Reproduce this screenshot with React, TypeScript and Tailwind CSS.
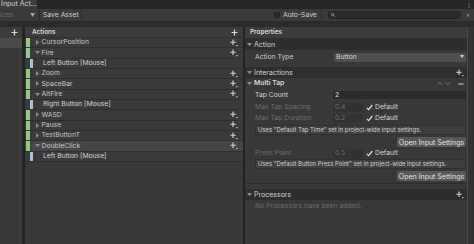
import React from "react";

const Tri = ({ open }: { open?: boolean }) => (
  <svg width="5" height="5" viewBox="0 0 5 5" className="shrink-0">
    {open ? <path d="M0 1 L5 1 L2.5 4.2 Z" fill="#8c8c8c" /> : <path d="M1 0 L4.2 2.5 L1 5 Z" fill="#8c8c8c" />}
  </svg>
);

const PlusMore = () => (
  <svg width="8" height="8" viewBox="0 0 8 8" className="shrink-0">
    <path d="M3 0.5 V6 M0.3 3.2 H5.7" stroke="#d8d8d8" strokeWidth="1.1" />
    <path d="M5.6 6.2 L8 6.2 L6.8 7.6 Z" fill="#d8d8d8" />
  </svg>
);

const Plus = () => (
  <svg width="7" height="7" viewBox="0 0 7 7" className="shrink-0">
    <path d="M3.5 0.5 V6.5 M0.5 3.5 H6.5" stroke="#d8d8d8" strokeWidth="1.2" />
  </svg>
);

const Check = () => (
  <svg width="7" height="7" viewBox="0 0 7 7" className="shrink-0">
    <path d="M0.8 3.8 L2.6 5.6 L6.3 1" stroke="#e6e6e6" strokeWidth="1.2" fill="none" />
  </svg>
);

const UpDown = () => (
  <svg width="14" height="5" viewBox="0 0 14 5" className="shrink-0">
    <path d="M0.5 3.8 L2.8 1.2 L5.1 3.8" stroke="#7a7a7a" strokeWidth="0.9" fill="none" />
    <path d="M8.5 1.2 L10.8 3.8 L13.1 1.2" stroke="#7a7a7a" strokeWidth="0.9" fill="none" />
  </svg>
);

type Row = { name: string; kind: "action" | "binding"; open?: boolean; selected?: boolean };

const rows: Row[] = [
  { name: "CursorPosition", kind: "action" },
  { name: "Fire", kind: "action", open: true },
  { name: "Left Button [Mouse]", kind: "binding" },
  { name: "Zoom", kind: "action" },
  { name: "SpaceBar", kind: "action" },
  { name: "AltFire", kind: "action", open: true },
  { name: "Right Button [Mouse]", kind: "binding" },
  { name: "WASD", kind: "action" },
  { name: "Pause", kind: "action" },
  { name: "TestButtonT", kind: "action" },
  { name: "DoubleClick", kind: "action", open: true, selected: true },
  { name: "Left Button [Mouse]", kind: "binding" },
];

const SectionHeader = ({ title, plus }: { title: string; plus?: boolean }) => (
  <div className="h-[11px] bg-[#2e2e2e] flex items-center pl-[2px] pr-[3px] gap-[2px] text-[#d2d2d2] text-[7px]">
    <Tri open />
    <span className="flex-1">{title}</span>
    {plus && <PlusMore />}
  </div>
);

const DefaultField = ({ label, value, h }: { label: string; value: string; h: string }) => (
  <div className={`${h} flex items-center pl-[10px]`}>
    <span className="w-[78px] text-[#6f6f6f]">{label}</span>
    <div className="w-[30px] h-[9px] bg-[#323232] rounded-[1px] flex items-center pl-[2px] text-[#6f6f6f]">{value}</div>
    <div className="ml-[3px] flex items-center gap-[2px] text-[#d6d6d6]">
      <Check />
      <span>Default</span>
    </div>
  </div>
);

const HelpBox = ({ text }: { text: string }) => (
  <div className="ml-[10px] mr-[1px] h-[10px] bg-[#3f3f3f] border border-[#2f2f2f] rounded-[1px] flex items-center pl-[2px] text-[5.9px] text-[#cfcfcf]">
    {text}
  </div>
);

const OpenButton = () => (
  <div className="flex justify-end pr-[1px]">
    <div className="w-[69px] h-[10px] bg-[#585858] rounded-[2px] flex items-center justify-center text-[#e2e2e2] text-[7px]">
      Open Input Settings
    </div>
  </div>
);

export default function App() {
  return (
    <div
      className="w-[474px] h-[244px] overflow-hidden bg-[#383838] flex flex-col text-[6.8px] leading-none text-[#c8c8c8]"
      style={{ fontFamily: "Inter, 'Noto Sans', sans-serif" }}
    >
      {/* tab strip */}
      <div className="h-[9px] bg-[#262626] flex items-stretch shrink-0">
        <div className="w-[37px] bg-[#3c3c3c] flex items-center pl-[1px] text-[#d0d0d0] text-[7px] -mt-[2px]">Input Act...</div>
        <div className="flex-1" />
        <div className="w-[10px] flex items-center justify-center text-[#bdbdbd] text-[6px]">⋮</div>
      </div>

      {/* toolbar */}
      <div className="h-[13px] bg-[#3a3a3a] border-b border-[#2a2a2a] flex items-center shrink-0">
        <span className="text-[#6d6d6d] w-[30px]">ices</span>
        <span className="text-[#a8a8a8] text-[5px] w-[9px]">▼</span>
        <div className="w-px h-full bg-[#2c2c2c]" />
        <span className="pl-[3px] w-[41px] text-[#d0d0d0]">Save Asset</span>
        <div className="w-px h-full bg-[#2c2c2c]" />
        <div className="flex-1" />
        <div className="w-[6px] h-[6px] bg-[#2a2a2a] border border-[#222] rounded-[1px]" />
        <span className="pl-[3px] w-[41px] text-[#d0d0d0]">Auto-Save</span>
        <div className="w-px h-full bg-[#2c2c2c]" />
        <div className="ml-[6px] w-[133px] h-[8px] bg-[#2a2a2a] rounded-[3px] border border-[#232323] flex items-center pl-[2px]">
          <svg width="4" height="4" viewBox="0 0 4 4">
            <circle cx="1.6" cy="1.6" r="1.1" stroke="#bbb" strokeWidth="0.7" fill="none" />
            <path d="M2.4 2.4 L3.7 3.7" stroke="#bbb" strokeWidth="0.7" />
          </svg>
        </div>
        <div className="w-[13px] flex justify-center text-[#aaa] text-[5px]">✕</div>
      </div>
      <div className="h-[5px] bg-[#2b2b2b] shrink-0" />

      {/* panels */}
      <div className="flex-1 flex min-h-0">
        {/* control schemes column */}
        <div className="w-[22px] flex flex-col">
          <div className="h-[11px] bg-[#3c3c3c] flex items-center justify-end pr-[4px]">
            <Plus />
          </div>
          <div className="h-[10px] bg-[#4a4a4a]" />
        </div>
        <div className="w-[3px] bg-[#232323]" />

        {/* actions column */}
        <div className="w-[218px] flex flex-col">
          <div className="h-[11px] bg-[#3c3c3c] flex items-center pl-[7px] pr-[5px] border-b border-[#2f2f2f]">
            <span className="flex-1 font-semibold text-[6.4px] text-[#d8d8d8]">Actions</span>
            <Plus />
          </div>
          {rows.map((r, i) => (
            <div
              key={i}
              className={`h-[10.33px] flex items-stretch border-b border-[#2f2f2f] ${r.selected ? "bg-[#464646]" : "bg-[#3a3a3a]"}`}
            >
              {r.kind === "action" ? (
                <>
                  <div className="w-[4px] ml-[1px] bg-[#96c786]" />
                  <div className="flex-1 flex items-center pl-[5px] pr-[5px] gap-[1.5px]">
                    <Tri open={r.open} />
                    <span className="flex-1 text-[#c6c6c6]">{r.name}</span>
                    <PlusMore />
                  </div>
                </>
              ) : (
                <>
                  <div className="w-[3px] ml-[5px] bg-[#a9c3d6]" />
                  <div className="flex-1 flex items-center pl-[10px] text-[#d4d4d4]">{r.name}</div>
                </>
              )}
            </div>
          ))}
        </div>
        <div className="w-[2px] bg-[#232323]" />

        {/* properties column */}
        <div className="w-[222px] flex flex-col">
          <div className="h-[12px] bg-[#3c3c3c] flex items-center pl-[5px] border-b border-[#2f2f2f]">
            <span className="font-semibold text-[6.4px] text-[#d8d8d8]">Properties</span>
          </div>
          <SectionHeader title="Action" />
          <div className="h-[14px] flex items-center pl-[10px] pr-[1px]">
            <span className="w-[79px] text-[#cfcfcf]">Action Type</span>
            <div className="flex-1 h-[9px] bg-[#4f4f4f] rounded-[2px] flex items-center pl-[2px] pr-[2px] text-[#d6d6d6]">
              <span className="flex-1">Button</span>
              <span className="text-[4px] text-[#ddd]">▼</span>
            </div>
          </div>
          <div className="h-[3px]" />
          <SectionHeader title="Interactions" plus />
          <div className="border-b border-[#2c2c2c] pb-[2px]">
            <div className="h-[11px] flex items-center pl-[2px] pr-[3px] gap-[2px] text-[#dadada] font-semibold">
              <Tri open />
              <span className="flex-1">Multi Tap</span>
              <UpDown />
              <svg width="6" height="6" viewBox="0 0 6 6" className="ml-[5px] shrink-0">
                <path d="M0.5 3 H5.5" stroke="#cfcfcf" strokeWidth="1.1" />
              </svg>
            </div>
            <div className="h-[12px] flex items-center pl-[10px] pr-[1px]">
              <span className="w-[78px] text-[#d6d6d6]">Tap Count</span>
              <div className="flex-1 h-[8px] bg-[#2a2a2a] rounded-[1px] flex items-center pl-[2px] text-[#e0e0e0]">2</div>
            </div>
            <DefaultField label="Max Tap Spacing" value="0.4" h="h-[12px]" />
            <DefaultField label="Max Tap Duration" value="0.2" h="h-[11px]" />
            <div className="h-[1px]" />
            <HelpBox text={'Uses "Default Tap Time" set in project-wide input settings.'} />
            <div className="h-[2px]" />
            <OpenButton />
            <div className="h-[1px]" />
            <DefaultField label="Press Point" value="0.5" h="h-[11px]" />
            <HelpBox text={'Uses "Default Button Press Point" set in project-wide input settings.'} />
            <div className="h-[2px]" />
            <OpenButton />
          </div>
          <div className="h-[5px]" />
          <SectionHeader title="Processors" plus />
          <div className="h-[12px] flex items-center pl-[10px] text-[#6e6e6e]">No Processors have been added.</div>
        </div>
        <div className="w-[7px] border-l border-[#4a4a4a] bg-[#323232]" />
      </div>
    </div>
  );
}
